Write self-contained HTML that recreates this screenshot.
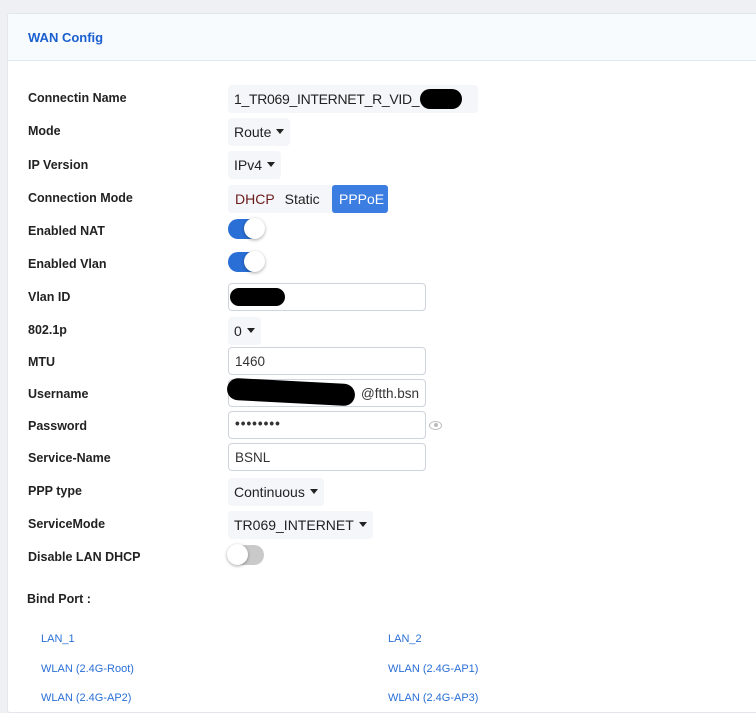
<!DOCTYPE html>
<html><head><style>
*{box-sizing:border-box;margin:0;padding:0}
body{width:756px;height:698px;overflow:hidden;background:#eef0f4;font-family:"Liberation Sans",sans-serif;position:relative}
.card{position:absolute;left:7px;top:13px;width:760px;height:700px;background:#fff;border:1px solid #e3e6ea;border-radius:3px}
.hd{height:47px;background:#f7fbfd;border-bottom:1px solid #dcebf0;padding:16px 0 0 20px;color:#1a5fd0;font-weight:bold;font-size:13px}
.l{position:absolute;left:28px;font-size:12.5px;font-weight:bold;color:#222;transform:translateY(-50%)}
.c{position:absolute;left:228px;font-size:14px;color:#222}
.sel{background:#f4f6f9;border-radius:4px;padding:0 6px;height:28px;line-height:29px}
.sel:after{content:"";display:inline-block;margin-left:5px;vertical-align:3px;border-left:4px solid transparent;border-right:4px solid transparent;border-top:5px solid #222}
.inp{width:198px;height:28px;border:1px solid #cfd3da;border-radius:4px;padding-left:6px;line-height:27px;font-size:13.5px;color:#333}
.tg{width:36px;height:20px;border-radius:10px;background:#2a6fd6;}
.tg:after{content:"";position:absolute;right:-1px;top:-1px;width:21px;height:21px;border-radius:50%;background:#fff;box-shadow:0 1px 3px rgba(0,0,0,.35)}
.tg.off{background:#c9c9c9}
.tg.off:after{left:-1px;right:auto}
.blot{position:absolute;background:#000;border-radius:12px}
a{position:absolute;font-size:11px;color:#2a6fd6;text-decoration:none}
</style></head><body>
<div class="card"><div class="hd">WAN Config</div></div>
<div class="l" style="top:98px">Connectin Name</div>
<div class="l" style="top:131px">Mode</div>
<div class="l" style="top:165px">IP Version</div>
<div class="l" style="top:198px">Connection Mode</div>
<div class="l" style="top:231px">Enabled NAT</div>
<div class="l" style="top:264px">Enabled Vlan</div>
<div class="l" style="top:297px">Vlan ID</div>
<div class="l" style="top:330px">802.1p</div>
<div class="l" style="top:362px">MTU</div>
<div class="l" style="top:394px">Username</div>
<div class="l" style="top:426px">Password</div>
<div class="l" style="top:458px">Service-Name</div>
<div class="l" style="top:491px">PPP type</div>
<div class="l" style="top:524px">ServiceMode</div>
<div class="l" style="top:557px">Disable LAN DHCP</div>
<div class="l" style="top:599px;left:27px">Bind Port :</div>

<div class="c sel" style="top:85px;width:250px;letter-spacing:-0.3px">1_TR069_INTERNET_R_VID_<span style="display:inline-block;width:40px"></span></div>
<div class="blot" style="left:420px;top:89px;width:42px;height:20px"></div>
<div class="c sel" style="top:118px">Route</div>
<div class="c sel" style="top:151px">IPv4</div>
<div class="c" style="top:185px;height:28px;width:160px;background:#f4f6f9;border-radius:4px;line-height:29px">
<span style="padding-left:7px;color:#6b1d1d">DHCP</span><span style="padding-left:10px">Static</span>
<span style="position:absolute;left:104px;top:0;width:56px;height:28px;background:#3b7de0;color:#fff;border-radius:3px;padding-left:7px">PPPoE</span></div>
<div class="c tg" style="top:219px"></div>
<div class="c tg" style="top:252px"></div>
<div class="c inp" style="top:283px"></div>
<div class="blot" style="left:230px;top:288px;width:55px;height:18px"></div>
<div class="c sel" style="top:317px">0</div>
<div class="c inp" style="top:347px">1460</div>
<div class="c inp" style="top:379px;text-align:right;padding-right:6px">@ftth.bsn</div>
<div class="blot" style="left:227px;top:381px;width:128px;height:22px;border-radius:12px;transform:rotate(3deg)"></div>
<div class="c inp" style="top:411px;letter-spacing:1px;font-weight:bold;line-height:24px">••••••••</div>
<div style="position:absolute;left:429px;top:421px;width:13px;height:9px;border:1.5px solid #bbb;border-radius:50%"><div style="width:4px;height:4px;background:#bbb;border-radius:50%;margin:1px auto"></div></div>
<div class="c inp" style="top:443px">BSNL</div>
<div class="c sel" style="top:478px">Continuous</div>
<div class="c sel" style="top:511px">TR069_INTERNET</div>
<div class="c tg off" style="top:545px"></div>

<a style="left:41px;top:633px">LAN_1</a>
<a style="left:388px;top:633px">LAN_2</a>
<a style="left:41px;top:663px">WLAN (2.4G-Root)</a>
<a style="left:388px;top:663px">WLAN (2.4G-AP1)</a>
<a style="left:41px;top:692px">WLAN (2.4G-AP2)</a>
<a style="left:388px;top:692px">WLAN (2.4G-AP3)</a>
</body></html>
